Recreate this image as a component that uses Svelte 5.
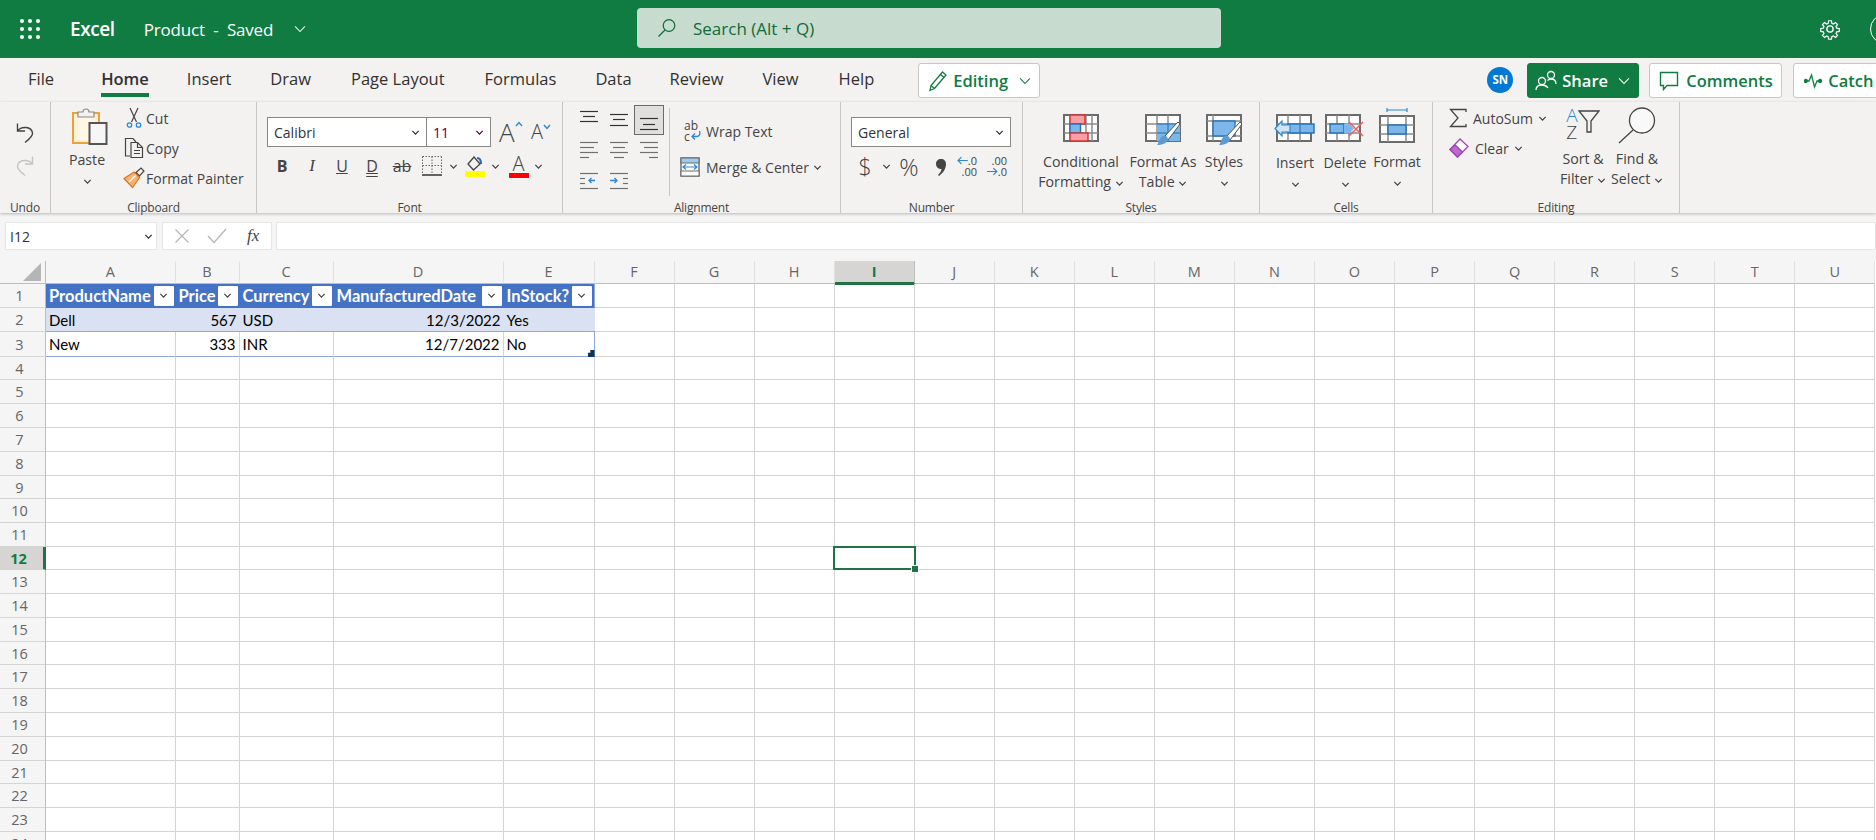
<script>
	const colNames = 'ABCDEFGHIJKLMNOPQRSTU'.split('');
	const rowNums = Array.from({ length: 24 }, (_, i) => i + 1);
	const tableData = {
		1: ['ProductName', 'Price', 'Currency', 'ManufacturedDate', 'InStock?'],
		2: ['Dell', '567', 'USD', '12/3/2022', 'Yes'],
		3: ['New', '333', 'INR', '12/7/2022', 'No']
	};
	const tabs = ['File', 'Home', 'Insert', 'Draw', 'Page Layout', 'Formulas', 'Data', 'Review', 'View', 'Help'];

	// each alignment button: horizontal lines as [y, x1, x2] in a 30x30 slot
	const alignBtns = [
		{ dark: true, lines: [[6, 6, 24], [11, 9, 21], [16, 6, 24]] },
		{ dark: true, lines: [[9, 6, 24], [14, 9, 21], [20, 6, 24]] },
		{ dark: true, on: true, lines: [[13, 6, 24], [19, 9, 21], [24, 6, 24]] },
		{ lines: [[7, 6, 24], [12, 6, 20], [17, 6, 24], [22, 6, 15]] },
		{ lines: [[7, 6, 24], [12, 9, 21], [17, 6, 24], [22, 10, 20]] },
		{ lines: [[7, 6, 24], [12, 10, 24], [17, 6, 24], [22, 15, 24]] },
		{ lines: [[8, 6, 24], [13, 6, 11], [18, 6, 11], [23, 6, 24]], arrow: 'M21 15.5h-6M17.5 13l-2.5 2.500 2.500 2.500' },
		{ lines: [[8, 6, 24], [13, 19, 24], [18, 19, 24], [23, 6, 24]], arrow: 'M6 15.5h7M10.500 13l2.500 2.500-2.500 2.500' }
	];
</script>

{#snippet chev(w = 9, sw = 1.4)}
	<svg class="chev" width={w} height={w} viewBox="0 0 10 10"><path d="M1.500 3.200 5 6.800l3.500-3.600" fill="none" stroke="currentColor" stroke-width={sw} /></svg>
{/snippet}

{#snippet gridLines(vs, hs)}
	<rect x="1" y="1" width="34" height="26" fill="#fff" stroke="#6b6b6b" stroke-width="2" />
	{#each vs as x}<path d="M{x} 1v26" stroke="#8a8a8a" stroke-width="1.500" />{/each}
	{#each hs as y}<path d="M1 {y}h34" stroke="#8a8a8a" stroke-width="1.500" />{/each}
{/snippet}

{#snippet brush(dx, dy)}
	<g transform="translate({dx} {dy})">
		<path d="M9 17 23 2l2 2-12 16z" fill="#fff" stroke="#555" stroke-width="1" />
		<path d="M8 16c3-1 5 1 5 4-1 3-6 5-11 5 2-2 1-4 3-6 1-2 2-3 3-3z" fill="#5b9bd5" />
	</g>
{/snippet}

<div class="page">
	<header class="topbar">
		<svg class="waffle" width="22" height="20" viewBox="0 0 22 20">
			{#each [2, 10, 18] as y}
				{#each [3, 11, 19] as x}<circle cx={x} cy={y} r="2" fill="#fff" />{/each}
			{/each}
		</svg>
		<span class="app-name">Excel</span>
		<span class="doc-name">Product&nbsp; -&nbsp; Saved</span>
		<span class="doc-chev">{@render chev(14, 0.8)}</span>
		<div class="search">
			<svg width="20" height="20" viewBox="0 0 20 20" fill="none" stroke="#0f6b3a" stroke-width="1.200"><circle cx="12" cy="7.500" r="5.800" /><path d="M8 12 1.500 18.500" /></svg>
			<span>Search (Alt + Q)</span>
		</div>
		<svg class="gear" width="22" height="22" viewBox="0 0 24 24" fill="none" stroke="#fff" stroke-width="1.500">
			<path d="M10.300 2h3.400l.5 3 2 .9 2.500-1.800 2.400 2.400-1.800 2.500.9 2 3 .5v3.400l-3 .5-.9 2 1.800 2.500-2.400 2.400-2.500-1.800-2 .9-.5 3h-3.400l-.5-3-2-.9-2.500 1.800-2.400-2.400 1.800-2.500-.9-2-3-.5v-3.400l3-.5.9-2-1.800-2.500 2.400-2.400 2.500 1.800 2-.9z" transform="translate(1.200 1.200) scale(.9)" />
			<circle cx="12" cy="12" r="3.400" />
		</svg>
		<span class="me"></span>
	</header>

	<nav class="tabrow">
		{#each tabs as t}
			<span class="tab" class:current={t === 'Home'}>{t}</span>
		{/each}
		<button class="pill editing">
			<svg width="20" height="22" viewBox="0 0 20 22" fill="none" stroke="#107c41" stroke-width="1.300"><path d="M14.500 2 18 5 6.500 18.500 2 20.500l1-5z" /><path d="M12.500 4.500l3.500 3M3 15.500l3.500 3" /></svg>
			<b>Editing</b>
			<span class="pill-chev">{@render chev(14, 0.8)}</span>
		</button>
		<span class="avatar">SN</span>
		<button class="pill share">
			<svg width="24" height="22" viewBox="0 0 24 22" fill="none" stroke="#fff" stroke-width="1.300"><circle cx="8" cy="11" r="3.500" /><path d="M2 20c0-3.500 2.500-5 6-5s5 1.500 6 3" /><circle cx="17" cy="5" r="3.500" /><path d="M13.500 10.500c1-1 2-1.500 3.500-1.500 3 0 5 2 5 5" /></svg>
			<b>Share</b>
			<span class="pill-chev">{@render chev(14, 0.8)}</span>
		</button>
		<button class="pill comments">
			<svg width="20" height="22" viewBox="0 0 20 22" fill="none" stroke="#107c41" stroke-width="1.400"><path d="M1.500 2.500h17v13H8l-3.500 4v-4h-3z" /></svg>
			<b>Comments</b>
		</button>
		<button class="pill catch">
			<svg width="18" height="16" viewBox="0 0 18 16" fill="none" stroke="#107c41" stroke-width="1.300"><circle cx="1.800" cy="8" r="1.500" fill="#107c41" /><circle cx="16" cy="8" r="1.500" fill="#107c41" /><path d="M2 8h3l2.500-6 3 12 2.500-6h3" /></svg>
			<b>Catch</b>
		</button>
	</nav>

	<section class="ribbon">
		<div class="group g-undo">
			<div class="body undo-col">
				<svg width="20" height="22" viewBox="0 0 20 22" fill="none" stroke="#444" stroke-width="1.400"><path d="M2.500 1.500V9H10M2.500 9C6 4 16.500 4 17.500 11c.4 3-3 6-7.500 9.500" /></svg>
				<svg width="20" height="22" viewBox="0 0 20 22" fill="none" stroke="#c4c4c4" stroke-width="1.400"><path d="M17.500 1.500V9H10M17.500 9C14 4 3.500 4 2.500 11c-.4 3 3 6 7.500 9.500" /></svg>
			</div>
			<div class="label">Undo</div>
		</div>

		<div class="group g-clip">
			<div class="body">
				<div class="tall paste">
					<div class="ticon">
						<svg width="38" height="38" viewBox="0 0 38 38">
							<rect x="3" y="6" width="26" height="30" fill="#fdf0d5" stroke="#eaa33c" stroke-width="2" />
							<rect x="7.500" y="9" width="17" height="24" fill="#fff7e6" />
							<path d="M8 10V5h5c0-4 6-4 6 0h5v5z" fill="#f3f2f1" stroke="#8a8a8a" stroke-width="1.200" />
							<rect x="19.500" y="16" width="17" height="21" fill="#f6f6f6" stroke="#555" stroke-width="2" />
						</svg>
					</div>
					<div class="tline">Paste</div>
					<div class="tline">{@render chev()}</div>
				</div>
				<div class="minis">
					<div class="mini">
						<span class="mi">
							<svg width="16" height="22" viewBox="0 0 16 22" fill="none"><path d="M4 1l6.500 14M12 1 5.500 15" stroke="#444" stroke-width="1.200" /><circle cx="3.500" cy="18" r="2.200" stroke="#2b88d8" stroke-width="1.300" /><circle cx="12.500" cy="18" r="2.200" stroke="#2b88d8" stroke-width="1.300" /></svg>
						</span>Cut
					</div>
					<div class="mini">
						<span class="mi">
							<svg width="20" height="22" viewBox="0 0 20 22" fill="none" stroke="#444" stroke-width="1.200"><path d="M6 19H1.500V1.500H9L12 5" /><path d="M7 5.500h6.500l5 5V20.500H7z" fill="#f3f2f1" /><path d="M13.500 5.500v5h5M10 13.500h6M10 16.500h6" /></svg>
						</span>Copy
					</div>
					<div class="mini">
						<span class="mi">
							<svg width="22" height="22" viewBox="0 0 22 22"><path d="M1 11.500 11 5l5.500 5.500-7 10z" fill="#f6b26b" stroke="#d9762b" stroke-width="1.200" /><path d="M6 15 13 8" stroke="#fff" stroke-width="1.500" /><path d="M13 5.500 18 1l3 3-4.500 5z" fill="#f3f2f1" stroke="#444" stroke-width="1.200" /></svg>
						</span>Format Painter
					</div>
				</div>
			</div>
			<div class="label">Clipboard</div>
		</div>

		<div class="group g-font">
			<div class="body col">
				<div class="toprow">
					<div class="select fontsel">
						<span class="sel-a">Calibri {@render chev()}</span>
						<span class="sel-b">11 {@render chev()}</span>
					</div>
					<span class="grow big">A<svg width="8" height="6" viewBox="0 0 8 6"><path d="M1 5l3-3.500L7 5" fill="none" stroke="#2b88d8" stroke-width="1.400" /></svg></span>
					<span class="grow small">A<svg width="8" height="6" viewBox="0 0 8 6"><path d="M1 1l3 3.500L7 1" fill="none" stroke="#2b88d8" stroke-width="1.400" /></svg></span>
				</div>
				<div class="fmtrow">
					<span class="slot b">B</span>
					<span class="slot i">I</span>
					<span class="slot u">U</span>
					<span class="slot d">D</span>
					<span class="slot s">ab</span>
					<span class="slot bd">
						<svg width="20" height="20" viewBox="0 0 20 20" fill="none"><path d="M.5.500h19M.5.500v18M19.500.500v18M10 .5v18M.5 9.500h19" stroke="#666" stroke-dasharray="1.500 1.500" /><path d="M0 19h20" stroke="#333" stroke-width="1.500" /></svg>
					</span>
					<span class="cslot">{@render chev()}</span>
					<span class="slot fill">
						<svg width="20" height="22" viewBox="0 0 20 22"><path d="M9 2 3 9l5.500 6L15 9z" fill="none" stroke="#444" stroke-width="1.300" /><path d="M12 3c3 0 4 3 4 6" fill="none" stroke="#1d6fb8" stroke-width="2.200" /><rect y="16" width="20" height="6" fill="#ffff00" /></svg>
					</span>
					<span class="cslot">{@render chev()}</span>
					<span class="slot color">A<i></i></span>
					<span class="cslot">{@render chev()}</span>
				</div>
			</div>
			<div class="label">Font</div>
		</div>

		<div class="group g-align">
			<div class="body">
				<div class="aligngrid">
					{#each alignBtns as a}
						<span class="al" class:on={a.on}>
							<svg width="30" height="30" viewBox="0 0 30 30">
								{#each a.lines as [y, x1, x2]}
									<path d="M{x1} {y + 0.5}H{x2}" stroke={a.dark ? '#333' : '#707070'} stroke-width="1.200" />
								{/each}
								{#if a.arrow}<path d={a.arrow} fill="none" stroke="#2b88d8" stroke-width="1.300" />{/if}
							</svg>
						</span>
					{/each}
				</div>
				<div class="inner-div"></div>
				<div class="alignside">
					<div class="mini wrap">
						<span class="wrapicon"><span>ab</span><span>c<svg width="11" height="10" viewBox="0 0 11 10" fill="none" stroke="#2b88d8" stroke-width="1.300"><path d="M9.500 0c1 3 0 5.500-3 5.500H2M5 2.500 2 5.500l3 3" /></svg></span></span>
						Wrap Text
					</div>
					<div class="mini merge">
						<svg width="20" height="20" viewBox="0 0 20 20" fill="none"><rect x="1" y="1" width="18" height="18" fill="#fff" stroke="#6b6b6b" stroke-width="1.400" /><rect x="1" y="1" width="18" height="5" fill="#9ecbee" stroke="#6b6b6b" /><rect x="1" y="14" width="18" height="5" fill="#fff" stroke="#6b6b6b" /><path d="M3 10h14M6 7.500 3 10l3 2.500M14 7.500l3 2.500-3 2.500" stroke="#2b88d8" stroke-width="1.200" /></svg>
						Merge &amp; Center <span class="trail">{@render chev()}</span>
					</div>
				</div>
			</div>
			<div class="label">Alignment</div>
		</div>

		<div class="group g-num">
			<div class="body col">
				<div class="toprow">
					<div class="select numsel"><span class="sel-a">General {@render chev()}</span></div>
				</div>
				<div class="fmtrow numrow">
					<span class="dollar">$</span>
					<span class="dch">{@render chev()}</span>
					<span class="pct">%</span>
					<span class="comma">
						<svg width="10" height="17" viewBox="0 0 10 17"><path d="M5 0c3 0 5 2 5 5 0 5-3 9-7 12l-1-1c2-2 3.500-4 3.500-6C2.500 10 0 8 0 5s2-5 5-5z" fill="#444" /></svg>
					</span>
					<span class="dec">
						<span><svg width="11" height="9" viewBox="0 0 11 9" fill="none" stroke="#2b88d8" stroke-width="1.200"><path d="M11 4.500H1M4.500 1 1 4.500 4.500 8" /></svg>.0</span>
						<span class="r">.00</span>
					</span>
					<span class="dec">
						<span class="r">.00</span>
						<span><svg width="11" height="9" viewBox="0 0 11 9" fill="none" stroke="#2b88d8" stroke-width="1.200"><path d="M0 4.500h10M6.500 1 10 4.500 6.500 8" /></svg>.0</span>
					</span>
				</div>
			</div>
			<div class="label">Number</div>
		</div>

		<div class="group g-styles">
			<div class="body">
				<div class="tall w96">
					<div class="ticon sh">
						<svg width="36" height="28" viewBox="0 0 36 28">
							{@render gridLines([7, 23, 29], [10, 19])}
							<rect x="7" y="1" width="15" height="9" fill="#f99ea5" stroke="#d32f2f" stroke-width="1.400" />
							<rect x="7" y="10" width="10.500" height="9" fill="#7db7ea" stroke="#1d6fb8" stroke-width="1.400" />
							<rect x="7" y="19" width="18" height="8" fill="#f99ea5" stroke="#d32f2f" stroke-width="1.400" />
						</svg>
					</div>
					<div class="tline">Conditional</div>
					<div class="tline">Formatting {@render chev()}</div>
				</div>
				<div class="tall w68">
					<div class="ticon sh">
						<svg width="40" height="36" viewBox="0 0 40 36" class="wide">
							{@render gridLines([12, 23], [10, 19])}
							<rect x="12" y="10" width="23" height="17" fill="#7db7ea" />
							<path d="M12 10h23M23 10v17M12 19h23" stroke="#1d6fb8" />
							{@render brush(10, 6)}
						</svg>
					</div>
					<div class="tline">Format As</div>
					<div class="tline">Table {@render chev()}</div>
				</div>
				<div class="tall w54">
					<div class="ticon sh">
						<svg width="40" height="36" viewBox="0 0 40 36" class="wide">
							{@render gridLines([7], [7, 22])}
							<rect x="7" y="7" width="22" height="15" fill="#7db7ea" stroke="#1d6fb8" stroke-width="1.300" />
							{@render brush(11, 6)}
						</svg>
					</div>
					<div class="tline">Styles</div>
					<div class="tline">{@render chev()}</div>
				</div>
			</div>
			<div class="label">Styles</div>
		</div>

		<div class="group g-cells">
			<div class="body">
				<div class="tall w50 lower">
					<div class="ticon sh">
						<svg width="42" height="28" viewBox="0 0 42 28">
							<g transform="translate(2 0)">{@render gridLines([12, 24], [10, 19])}</g>
							<rect x="14" y="10" width="26" height="9" fill="#7db7ea" stroke="#1d6fb8" stroke-width="1.400" />
							<path d="M26 10v9" stroke="#1d6fb8" />
							<path d="M16 11H8V7L1 14.500 8 22v-4h8z" fill="#cfe4f7" stroke="#2b88d8" stroke-width="1.200" />
						</svg>
					</div>
					<div class="tline">Insert</div>
					<div class="tline">{@render chev()}</div>
				</div>
				<div class="tall w50 lower">
					<div class="ticon sh">
						<svg width="40" height="28" viewBox="0 0 40 28">
							{@render gridLines([12, 24], [10, 19])}
							<rect x="5" y="10" width="14" height="9" fill="#7db7ea" stroke="#1d6fb8" stroke-width="1.400" />
							<path d="M19 10h6l4 4.500-4 4.500h-6z" fill="#7db7ea" />
							<path d="M24 8 38 22M38 8 24 22" stroke="#f25c5c" stroke-width="1.500" />
						</svg>
					</div>
					<div class="tline">Delete</div>
					<div class="tline">{@render chev()}</div>
				</div>
				<div class="tall w54">
					<div class="ticon top">
						<svg width="36" height="36" viewBox="0 0 36 36">
							<path d="M8 3h20M8 1v4M28 1v4" stroke="#2b88d8" stroke-width="1.200" fill="none" />
							<g transform="translate(0 8)">
								{@render gridLines([9, 27], [10, 19])}
								<rect x="9" y="10" width="18" height="9" fill="#7db7ea" stroke="#1d6fb8" stroke-width="1.400" />
							</g>
						</svg>
					</div>
					<div class="tline">Format</div>
					<div class="tline">{@render chev()}</div>
				</div>
			</div>
			<div class="label">Cells</div>
		</div>

		<div class="group g-edit">
			<div class="body">
				<div class="minis editminis">
					<div class="mini">
						<svg class="mi2" width="18" height="20" viewBox="0 0 18 20" fill="none" stroke="#444" stroke-width="1.300"><path d="M17 4V1.500H1.500L9 10l-7.500 8.500H17V16" /></svg>
						AutoSum <span class="trail">{@render chev()}</span>
					</div>
					<div class="mini">
						<svg class="mi2" width="20" height="20" viewBox="0 0 20 20"><path d="M1 11.500 11 1l8 7.500L8.500 19z" fill="#fff" stroke="#a146b5" stroke-width="1.300" /><path d="M1 11.500 6 7l7.500 7-5 5z" fill="#b96bc9" stroke="#a146b5" stroke-width="1.300" /></svg>
						Clear <span class="trail">{@render chev()}</span>
					</div>
				</div>
				<div class="tall w46 sort">
					<div class="ticon">
						<span class="azbox">
							<span class="az"><em>A</em><em>Z</em></span>
							<svg width="22" height="26" viewBox="0 0 22 26" fill="none" stroke="#444" stroke-width="1.300"><path d="M1 4h20l-8 10v11h-4V14z" /></svg>
						</span>
					</div>
					<div class="tline">Sort &amp;</div>
					<div class="tline">Filter {@render chev()}</div>
				</div>
				<div class="tall w62 sort">
					<div class="ticon">
						<svg width="38" height="38" viewBox="0 0 38 38" fill="none" stroke="#444" stroke-width="1.300"><circle cx="24" cy="13.500" r="12.500" fill="#f9f9f9" /><path d="M15 23 1 36" /></svg>
					</div>
					<div class="tline">Find &amp;</div>
					<div class="tline">Select {@render chev()}</div>
				</div>
			</div>
			<div class="label">Editing</div>
		</div>
	</section>

	<div class="formula">
		<div class="fbox name">I12 {@render chev()}</div>
		<div class="fbox fx">
			<svg width="16" height="16" viewBox="0 0 16 16" fill="none" stroke="#b5b5b5" stroke-width="1.200"><path d="M1.500 1.500l13 13M14.500 1.500l-13 13" /></svg>
			<svg width="20" height="16" viewBox="0 0 20 16" fill="none" stroke="#b5b5b5" stroke-width="1.200"><path d="M1 8l6 6.500L19 1" /></svg>
			<span>fx</span>
		</div>
		<div class="fbox input"></div>
	</div>

	<div class="sheet">
		<div class="corner"><i></i></div>
		{#each colNames as c}
			<div class="ch" class:sel={c === 'I'}>{c}</div>
		{/each}
		{#each rowNums as r}
			<div class="rh" class:sel={r === 12}>{r}</div>
			{#each colNames as c, i}
				{#if tableData[r] && i < 5}
					{#if r === 1}
						<div class="cell thead" class:last={i === 4}>
							<span>{tableData[r][i]}</span>
							<span class="filter">{@render chev()}</span>
						</div>
					{:else}
						<div class="cell tcell" class:band={r === 2} class:num={i === 1 || i === 3} class:last={i === 4} class:corner-h={r === 3 && i === 4}>{tableData[r][i]}</div>
					{/if}
				{:else}
					<div class="cell" class:cursor={r === 12 && c === 'I'}></div>
				{/if}
			{/each}
		{/each}
	</div>
</div>

<style>
	:global(body) {
		margin: 0;
		background: #fff;
	}

	.page {
		width: 1876px;
		height: 840px;
		overflow: hidden;
		font-family: 'Open Sans', 'Noto Sans', sans-serif;
		color: #444;
		font-size: 14px;
	}

	.chev {
		vertical-align: -1px;
	}

	/* title bar */
	.topbar {
		height: 58px;
		background: #107c41;
		color: #fff;
		display: flex;
		align-items: center;
	}
	.waffle {
		margin-left: 19px;
	}
	.app-name {
		margin-left: 29px;
		font-size: 19px;
		font-weight: 600;
		letter-spacing: -0.4px;
	}
	.doc-name {
		margin-left: 29px;
		font-size: 17px;
		letter-spacing: -0.2px;
	}
	.doc-chev {
		margin-left: 20px;
		display: flex;
		opacity: 0.9;
	}
	.search {
		position: absolute;
		left: 637px;
		top: 8px;
		width: 584px;
		height: 40px;
		box-sizing: border-box;
		background: #c8dbcf;
		border-radius: 4px;
		display: flex;
		align-items: center;
		gap: 16px;
		padding-left: 20px;
		color: #0f6b3a;
		font-size: 17px;
	}
	.gear {
		margin-left: auto;
		margin-right: 29px;
	}
	.me {
		width: 30px;
		height: 30px;
		flex: none;
		border: 1.500px solid #fff;
		border-radius: 50%;
		margin-right: -24px;
		box-sizing: border-box;
	}

	/* tabs */
	.tabrow {
		height: 44px;
		background: #f3f2f1;
		display: flex;
		align-items: flex-start;
		padding-left: 28px;
		box-sizing: border-box;
		white-space: nowrap;
	}
	.tab {
		margin-right: 40px;
		height: 39px;
		line-height: 42px;
		font-size: 16.500px;
		color: #323130;
		box-sizing: border-box;
	}
	.tab:nth-child(1) { margin-right: 47px; }
	.tab:nth-child(2) { margin-right: 38px; }
	.tab:nth-child(3) { margin-right: 39px; }
	.tab:nth-child(6) { margin-right: 39px; }
	.tab:nth-child(7) { margin-right: 38px; }
	.tab:nth-child(8) { margin-right: 39px; }
	.tab.current {
		font-weight: 600;
		border-bottom: 4px solid #107c41;
	}
	.pill {
		flex: none;
		height: 35px;
		margin-top: 5px;
		box-sizing: border-box;
		background: #fff;
		border: 1px solid #c8c6c4;
		border-radius: 3px;
		display: flex;
		align-items: center;
		font-family: inherit;
		font-size: 16.500px;
		color: #107c41;
		padding: 0 0 0 9px;
		gap: 5px;
	}
	.pill b {
		font-weight: 600;
	}
	.pill-chev {
		display: flex;
		margin-left: 5px;
	}
	.editing {
		width: 122px;
		margin-left: 4px;
	}
	.avatar {
		flex: none;
		width: 26px;
		height: 26px;
		margin: 9px 14px 0 447px;
		border-radius: 50%;
		background: #0078d4;
		color: #fff;
		font-size: 11.500px;
		font-weight: 700;
		line-height: 26px;
		text-align: center;
	}
	.share {
		width: 112px;
		background: #107c41;
		border-color: #107c41;
		color: #fff;
		padding-left: 6px;
		gap: 4px;
	}
	.comments {
		width: 133px;
		margin-left: 10px;
		gap: 7px;
		padding-left: 9px;
	}
	.catch {
		width: 130px;
		margin-left: 11px;
		gap: 6px;
		padding-left: 10px;
		justify-content: flex-start;
	}

	/* ribbon */
	.ribbon {
		position: relative;
		height: 111px;
		background: #f3f2f1;
		display: flex;
		box-shadow: 0 1px 3px rgba(0, 0, 0, 0.25);
	}
	.group {
		height: 111px;
		box-sizing: border-box;
		border-right: 1px solid #c8c6c4;
		display: flex;
		flex-direction: column;
		flex: none;
	}
	.body {
		height: 100px;
		flex: none;
		display: flex;
		box-sizing: border-box;
	}
	.body.col {
		flex-direction: column;
	}
	.label {
		height: 12px;
		flex: none;
		line-height: 12px;
		font-size: 12px;
		text-align: center;
		color: #444;
		letter-spacing: -0.2px;
	}
	.g-undo { width: 51px; }
	.g-clip { width: 206px; }
	.g-font { width: 306px; }
	.g-align { width: 278px; }
	.g-num { width: 182px; }
	.g-styles { width: 237px; }
	.g-cells { width: 173px; }
	.g-edit { width: 247px; }

	.undo-col {
		flex-direction: column;
		align-items: center;
		padding-top: 20px;
		gap: 11px;
	}

	.tall {
		display: flex;
		flex-direction: column;
		align-items: center;
		flex: none;
		padding-top: 5px;
		font-size: 14.200px;
		white-space: nowrap;
	}
	.ticon {
		height: 45px;
		display: flex;
		align-items: flex-start;
		justify-content: center;
	}
	.ticon.sh {
		padding-top: 7px;
		height: 38px;
	}
	.ticon.top {
		height: 45px;
	}
	.tline {
		height: 20px;
		line-height: 20px;
	}
	.lower .ticon {
		height: 39px;
	}
	.wide {
		margin-left: 3px;
	}

	.paste {
		width: 40px;
		margin-left: 16px;
	}
	.paste .ticon {
		margin-left: 4px;
		height: 43px;
	}
	.minis {
		margin-left: 14px;
		padding-top: 1px;
		display: flex;
		flex-direction: column;
	}
	.mini {
		height: 30px;
		display: flex;
		align-items: center;
		font-size: 14px;
		white-space: nowrap;
		color: #444;
	}
	.mi {
		width: 25px;
		display: flex;
		justify-content: center;
	}
	.mi2 {
		margin-right: 6px;
		flex: none;
	}
	.trail {
		margin-left: 5px;
		display: flex;
	}

	/* font + number selects */
	.toprow {
		display: flex;
		align-items: center;
		margin: 15px 0 0 10px;
		height: 30px;
	}
	.select {
		height: 30px;
		box-sizing: border-box;
		border: 1px solid #8a8886;
		background: #fff;
		display: flex;
		font-size: 14px;
		line-height: 28px;
		color: #333;
	}
	.fontsel {
		width: 224px;
	}
	.numsel {
		width: 160px;
	}
	.sel-a {
		flex: 1;
		padding: 1px 6px 0;
		display: flex;
		justify-content: space-between;
		align-items: center;
	}
	.sel-b {
		width: 64px;
		box-sizing: border-box;
		border-left: 1px solid #8a8886;
		padding: 1px 6px 0;
		display: flex;
		justify-content: space-between;
		align-items: center;
		color: #500050;
	}
	.grow {
		display: flex;
		align-items: flex-start;
		color: #444;
		line-height: 1;
		font-weight: 300;
	}
	.grow.big {
		font-size: 26px;
		margin-left: 8px;
		width: 30px;
	}
	.grow.small {
		font-size: 20px;
		margin-left: 2px;
	}
	.grow svg {
		margin-top: 2px;
	}

	.fmtrow {
		display: flex;
		align-items: center;
		height: 24px;
		margin: 7px 0 0 10px;
	}
	.slot {
		width: 30px;
		flex: none;
		text-align: center;
		font-size: 17px;
		display: flex;
		justify-content: center;
		align-items: center;
		height: 24px;
	}
	.cslot {
		width: 12px;
		flex: none;
		display: flex;
		justify-content: center;
	}
	.b { font-weight: 700; font-size: 16px; color: #444; }
	.i { font-style: italic; font-family: 'Liberation Serif', serif; }
	.u { text-decoration: underline; font-size: 16px; }
	.d { text-decoration: underline double; font-size: 16px; }
	.s { text-decoration: line-through; font-size: 16px; }
	.bd { width: 30px; }
	.fill { width: 29px; margin-left: 1px; }
	.color {
		width: 27px;
		margin-left: 4px;
		position: relative;
		font-size: 20px;
		font-weight: 300;
		flex-direction: column;
		line-height: 18px;
	}
	.color i {
		display: block;
		width: 20px;
		height: 5px;
		background: #ff0000;
	}

	/* alignment */
	.aligngrid {
		display: grid;
		grid-template-columns: repeat(3, 30px);
		grid-auto-rows: 30px;
		margin: 3px 0 0 11px;
		width: 90px;
		height: 91px;
	}
	.al {
		display: block;
		height: 30px;
		box-sizing: border-box;
	}
	.al.on {
		background: #e1dfdd;
		box-shadow: inset 0 0 0 1px #6b6b6b;
	}
	.inner-div {
		width: 1px;
		height: 88px;
		background: #c8c6c4;
		margin: 6px 0 0 5px;
	}
	.alignside {
		display: flex;
		flex-direction: column;
		padding: 14px 0 0 10px;
	}
	.wrap {
		padding-left: 4px;
		gap: 4px;
		height: 30px;
	}
	.wrapicon {
		display: flex;
		flex-direction: column;
		font-size: 12px;
		line-height: 10px;
		width: 18px;
		color: #444;
	}
	.merge {
		gap: 6px;
		height: 30px;
		margin-top: 6px;
	}
	.merge .trail {
		margin-left: -2px;
	}

	/* number */
	.numrow {
		color: #444;
	}
	.dollar {
		width: 28px;
		text-align: center;
		font-size: 23px;
		font-weight: 300;
	}
	.dch {
		width: 14px;
		display: flex;
		justify-content: center;
	}
	.pct {
		width: 32px;
		text-align: center;
		font-size: 24px;
		font-weight: 300;
	}
	.comma {
		width: 32px;
		display: flex;
		justify-content: center;
		padding-top: 2px;
	}
	.dec {
		width: 20px;
		margin-right: 10px;
		display: flex;
		flex-direction: column;
		font-size: 11px;
		line-height: 11px;
		color: #444;
	}
	.dec span {
		display: flex;
		align-items: center;
		justify-content: flex-end;
	}

	/* styles and cells */
	.g-styles .body,
	.g-cells .body {
		padding-left: 10px;
	}
	.w96 { width: 96px; }
	.w68 { width: 68px; }
	.w54 { width: 54px; }
	.w50 { width: 50px; }

	/* editing */
	.editminis {
		margin-left: 16px;
		width: 111px;
		padding-top: 1px;
	}
	.w46 { width: 46px; }
	.w62 { width: 62px; }
	.sort .ticon {
		height: 42px;
	}
	.azbox {
		display: flex;
		align-items: flex-start;
	}
	.az {
		display: flex;
		flex-direction: column;
		font-size: 19px;
		line-height: 17px;
		font-weight: 300;
	}
	.az em {
		font-style: normal;
	}
	.az em:first-child {
		color: #2b88d8;
	}

	/* formula bar */
	.formula {
		height: 48px;
		box-sizing: border-box;
		padding-top: 9px;
		background: #f5f5f5;
		display: flex;
	}
	.fbox {
		height: 28px;
		box-sizing: border-box;
		background: #fff;
		border: 1px solid #e6e6e6;
		display: flex;
		align-items: center;
		flex: none;
	}
	.name {
		width: 152px;
		margin-left: 5px;
		padding: 0 3px 0 4px;
		justify-content: space-between;
		font-size: 14px;
		color: #333;
	}
	.fx {
		width: 110px;
		margin-left: 5px;
		padding-left: 11px;
		gap: 17px;
	}
	.fx span {
		font-family: 'Liberation Serif', serif;
		font-style: italic;
		font-size: 17px;
		color: #444;
		margin-left: 3px;
	}
	.input {
		flex: 1;
		margin-left: 4px;
	}

	/* sheet: row heights follow the reference's snapped gridlines */
	.sheet {
		display: grid;
		grid-template-columns: 46px 129.500px 64px 94px 170px 91px repeat(16, 80.050px);
		grid-template-rows: 23px 24px 24px 25px 23px 24px 24px 24px 24px 23px 24px 24px 23px 24px 24px 24px 23px 24px 24px 24px 24px 23px 24px 24px 24px;
		font-family: Lato, 'Open Sans', sans-serif;
		height: 579px;
		overflow: hidden;
	}
	.corner,
	.ch,
	.rh {
		background: #f5f5f5;
		box-sizing: border-box;
		color: #666;
		font-family: 'Open Sans', sans-serif;
		font-size: 14.500px;
		text-align: center;
	}
	.corner {
		border-right: 1px solid #bdbdbd;
		border-bottom: 1px solid #bdbdbd;
		position: relative;
	}
	.corner i {
		position: absolute;
		right: 4px;
		bottom: 2px;
		width: 18px;
		height: 18px;
		background: #b5b5b5;
		clip-path: polygon(100% 0, 100% 100%, 0 100%);
	}
	.ch {
		line-height: 22px;
		border-right: 1px solid #e1e1e1;
		border-bottom: 1px solid #bdbdbd;
	}
	.rh {
		display: flex;
		align-items: center;
		justify-content: center;
		line-height: 20px;
		padding: 1px 6px 0 0;
		border-right: 1px solid #bdbdbd;
		border-bottom: 1px solid #d4d4d4;
	}
	.ch.sel {
		background: #d6d5d3;
		color: #107c41;
		font-weight: 700;
		border-bottom: 3px solid #217346;
		margin-bottom: -1px;
		border-right-color: #bdbdbd;
	}
	.rh.sel {
		background: #d6d5d3;
		color: #107c41;
		font-weight: 700;
		border-right: 3px solid #217346;
	}
	.cell {
		box-sizing: border-box;
		border-right: 1px solid #d4d4d4;
		border-bottom: 1px solid #d4d4d4;
		font-size: 15px;
		color: #000;
		white-space: nowrap;
		min-width: 0;
	}
	.thead {
		background: #4472c4;
		color: #fff;
		font-weight: 700;
		font-size: 16.500px;
		display: flex;
		align-items: center;
		justify-content: space-between;
		padding: 0 2px 0 3px;
		border-right: none;
		border-bottom: 1px solid #4472c4;
	}
	.filter {
		width: 20px;
		height: 20px;
		background: #fff;
		border-radius: 1px;
		color: #444;
		display: flex;
		align-items: center;
		justify-content: center;
		flex: none;
	}
	.tcell {
		line-height: 24px;
		padding: 0 3px 0 3px;
		border-bottom: 1px solid #8ea9db;
	}
	.tcell.band {
		background: #d9e1f2;
		border-right: none;
	}
	.tcell.num {
		text-align: right;
	}
	.last {
		border-right: 1px solid #8ea9db;
	}
	.corner-h {
		position: relative;
	}
	.corner-h::after {
		content: '';
		position: absolute;
		right: -1px;
		bottom: -1px;
		width: 7px;
		height: 7px;
		background: #12345b;
		clip-path: polygon(100% 0, 100% 100%, 0 100%, 0 40%, 40% 40%, 40% 0);
	}
	.cursor {
		position: relative;
	}
	.cursor::before {
		content: '';
		position: absolute;
		left: -2px;
		top: -1px;
		right: -2px;
		bottom: -1px;
		border: 2.500px solid #217346;
		box-sizing: border-box;
	}
	.cursor::after {
		content: '';
		position: absolute;
		right: -4px;
		bottom: -3px;
		width: 6px;
		height: 6px;
		background: #217346;
		box-shadow: 0 0 0 1px #fff;
	}
</style>
